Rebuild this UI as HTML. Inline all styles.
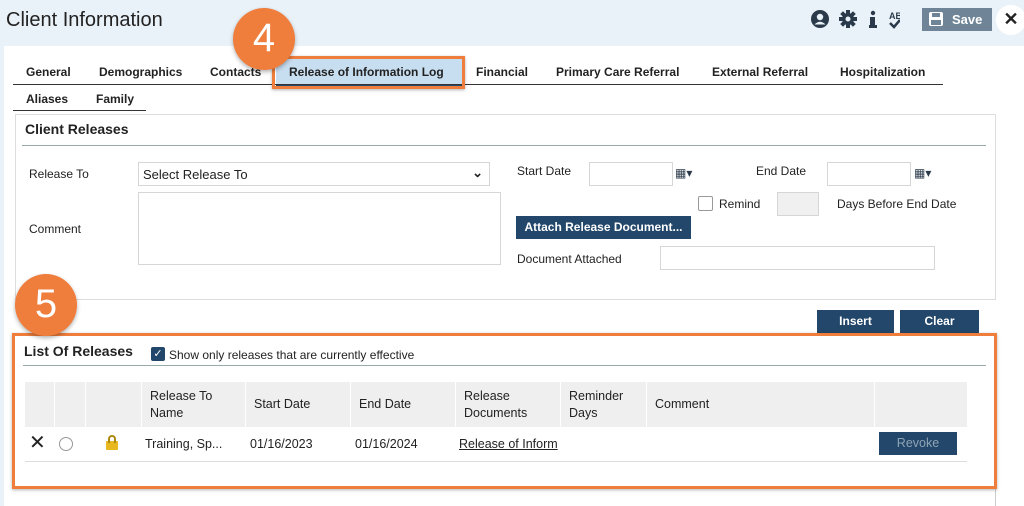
<!DOCTYPE html>
<html><head><style>
*{margin:0;padding:0;box-sizing:border-box}
body{width:1024px;height:506px;overflow:hidden;background:#eaf2f9;font-family:"Liberation Sans",sans-serif;font-size:12px;color:#222;position:relative}
.a{position:absolute;white-space:nowrap}
.b{font-weight:bold;font-size:12px}
.btn{position:absolute;background:#23476a;color:#fff;font-weight:bold;font-size:12px;text-align:center}
.inp{position:absolute;border:1px solid #d6d6d6;background:#fff}
.th{position:absolute;top:382px;height:45px;border-left:1px solid #fff;padding:4px 8px;font-size:12.5px;line-height:17px;display:flex;align-items:center}
.circ{position:absolute;width:62px;height:62px;border-radius:50%;background:#ef7d3c;color:#fff;font-size:40px;text-align:center;line-height:60px;box-shadow:0 2px 4px rgba(0,0,0,.3)}
</style></head><body>
<div class="a" style="left:6px;top:9px;font-size:20px;color:#222">Client Information</div>
<!-- icons -->
<svg class="a" style="left:810px;top:9px" width="90" height="22" viewBox="0 0 90 22">
<circle cx="10" cy="10" r="9" fill="#2b3a4a"/><circle cx="10" cy="8" r="3.2" fill="#eaf2f9"/><path d="M4.5 15.5 Q10 10 15.5 15.5" fill="#eaf2f9"/>
<g transform="translate(38,10)" fill="#2b3a4a"><circle r="6"/><rect x="-2" y="-9" width="4" height="18"/><rect x="-9" y="-2" width="18" height="4"/><rect x="-2" y="-9" width="4" height="18" transform="rotate(45)"/><rect x="-2" y="-9" width="4" height="18" transform="rotate(-45)"/><circle r="2.5" fill="#eaf2f9"/></g>
<g fill="#2b3a4a"><circle cx="63" cy="4" r="2.2"/><rect x="60" y="8" width="5" height="10"/><rect x="59" y="16" width="8" height="3"/></g>
<text x="79" y="10" font-size="9" font-weight="bold" fill="#2b3a4a" font-family="Liberation Sans">AB</text>
<path d="M80 14 L84 18 L90 11" stroke="#2b3a4a" stroke-width="2.5" fill="none"/>
</svg>
<div class="a" style="left:922px;top:8px;width:70px;height:23px;background:#6f8496;color:#fff;font-weight:bold;font-size:13px;line-height:23px;padding-left:30px">Save</div>
<div class="a" style="left:929px;top:12px;width:14px;height:14px;background:#fff;border-radius:2px"></div>
<div class="a" style="left:932px;top:13px;width:8px;height:4px;background:#6f8496"></div>
<div class="a" style="left:931px;top:20px;width:10px;height:5px;background:#6f8496"></div>
<div class="a" style="left:996px;top:5px;width:30px;height:30px;border-radius:50%;background:#fff;font-size:18px;font-weight:bold;text-align:center;line-height:28px;color:#222">✕</div>
<!-- white page -->
<div class="a" style="left:4px;top:46px;width:1020px;height:460px;background:#fff"></div>
<!-- tabs -->
<div class="a b" style="left:26px;top:65px">General</div>
<div class="a b" style="left:99px;top:65px">Demographics</div>
<div class="a b" style="left:210px;top:65px">Contacts</div>
<div class="a" style="left:276px;top:58px;width:186px;height:28px;background:#c7ddf0;border-bottom:2px solid #23476a"></div>
<div class="a b" style="left:289px;top:65px">Release of Information Log</div>
<div class="a b" style="left:476px;top:65px">Financial</div>
<div class="a b" style="left:556px;top:65px">Primary Care Referral</div>
<div class="a b" style="left:712px;top:65px">External Referral</div>
<div class="a b" style="left:840px;top:65px">Hospitalization</div>
<div class="a" style="left:13px;top:84px;width:930px;height:1px;background:#333"></div>
<div class="a" style="left:272px;top:56px;width:193px;height:33px;border:3px solid #ef7d3c;box-shadow:0 1px 3px rgba(0,0,0,.3)"></div>
<div class="a b" style="left:26px;top:92px">Aliases</div>
<div class="a b" style="left:96px;top:92px">Family</div>
<div class="a" style="left:13px;top:110px;width:133px;height:1px;background:#333"></div>
<div class="circ" style="left:233px;top:8px">4</div>
<!-- client releases -->
<div class="a" style="left:15px;top:114px;width:981px;height:186px;border:1px solid #ddd"></div>
<div class="a" style="left:25px;top:121px;font-size:14px;font-weight:bold">Client Releases</div>
<div class="a" style="left:22px;top:145px;width:964px;height:1px;background:#9aa"></div>
<div class="a" style="left:29px;top:167px">Release To</div>
<div class="inp" style="left:138px;top:162px;width:352px;height:24px;padding:4px;font-size:13px">Select Release To<span style="position:absolute;right:6px;top:2px;font-weight:bold">⌄</span></div>
<div class="a" style="left:29px;top:222px">Comment</div>
<div class="inp" style="left:138px;top:192px;width:363px;height:73px"></div>
<div class="a" style="left:517px;top:164px">Start Date</div>
<div class="inp" style="left:589px;top:162px;width:84px;height:24px"></div>
<div class="a" style="left:675px;top:166px;font-size:12px;color:#2b3a4a">▦▾</div>
<div class="a" style="left:756px;top:164px">End Date</div>
<div class="inp" style="left:827px;top:162px;width:84px;height:24px"></div>
<div class="a" style="left:914px;top:166px;font-size:12px;color:#2b3a4a">▦▾</div>
<div class="inp" style="left:698px;top:196px;width:15px;height:15px;border-color:#999;border-radius:2px"></div>
<div class="a" style="left:719px;top:197px">Remind</div>
<div class="inp" style="left:777px;top:192px;width:42px;height:24px;background:#f0f0f0"></div>
<div class="a" style="left:837px;top:197px">Days Before End Date</div>
<div class="btn" style="left:516px;top:216px;width:175px;height:23px;line-height:23px">Attach Release Document...</div>
<div class="a" style="left:517px;top:252px">Document Attached</div>
<div class="inp" style="left:660px;top:246px;width:275px;height:24px"></div>
<div class="btn" style="left:817px;top:310px;width:77px;height:23px;line-height:23px">Insert</div>
<div class="btn" style="left:900px;top:310px;width:79px;height:23px;line-height:23px">Clear</div>
<!-- list -->
<div class="a" style="left:24px;top:343px;font-size:14px;font-weight:bold">List Of Releases</div>
<div class="a" style="left:151px;top:347px;width:14px;height:14px;background:#23476a;border-radius:2px;color:#fff;font-size:11px;line-height:14px;text-align:center">✓</div>
<div class="a" style="left:169px;top:348px">Show only releases that are currently effective</div>
<div class="a" style="left:23px;top:365px;width:963px;height:1px;background:#9aa"></div>
<div class="a" style="left:25px;top:382px;width:942px;height:45px;background:#efefef"></div>
<div class="th" style="left:54px;width:1px"></div>
<div class="th" style="left:85px;width:1px"></div>
<div class="th" style="left:141px;width:104px">Release To Name</div>
<div class="th" style="left:245px">Start Date</div>
<div class="th" style="left:350px">End Date</div>
<div class="th" style="left:455px;width:104px">Release Documents</div>
<div class="th" style="left:560px;width:86px">Reminder Days</div>
<div class="th" style="left:646px">Comment</div>
<div class="th" style="left:874px;width:1px"></div>
<div class="a" style="left:29px;top:433px;font-size:20px;line-height:20px">✕</div>
<div class="a" style="left:59px;top:437px;width:14px;height:14px;border:1px solid #999;border-radius:50%"></div>
<div class="a" style="left:106px;top:437px;width:12px;height:9px;background:#e8b820;border-radius:1px;top:441px"></div>
<div class="a" style="left:108px;top:435px;width:8px;height:8px;border:2px solid #b08a10;border-bottom:none;border-radius:4px 4px 0 0"></div>
<div class="a" style="left:145px;top:437px;font-size:12.5px">Training, Sp...</div>
<div class="a" style="left:250px;top:437px;font-size:12.5px">01/16/2023</div>
<div class="a" style="left:355px;top:437px;font-size:12.5px">01/16/2024</div>
<div class="a" style="left:459px;top:437px;font-size:12.5px;text-decoration:underline">Release of Inform</div>
<div class="btn" style="left:879px;top:432px;width:78px;height:23px;line-height:23px;color:#8fa3b5;font-weight:normal;font-size:12.5px">Revoke</div>
<div class="a" style="left:25px;top:461px;width:942px;height:1px;background:#ddd"></div>
<div class="a" style="left:995px;top:488px;width:1px;height:18px;background:#ccc"></div>
<div class="a" style="left:12px;top:333px;width:985px;height:156px;border:3px solid #ef7d3c;box-shadow:0 1px 3px rgba(0,0,0,.3)"></div>
<div class="circ" style="left:15px;top:274px">5</div>
</body></html>
